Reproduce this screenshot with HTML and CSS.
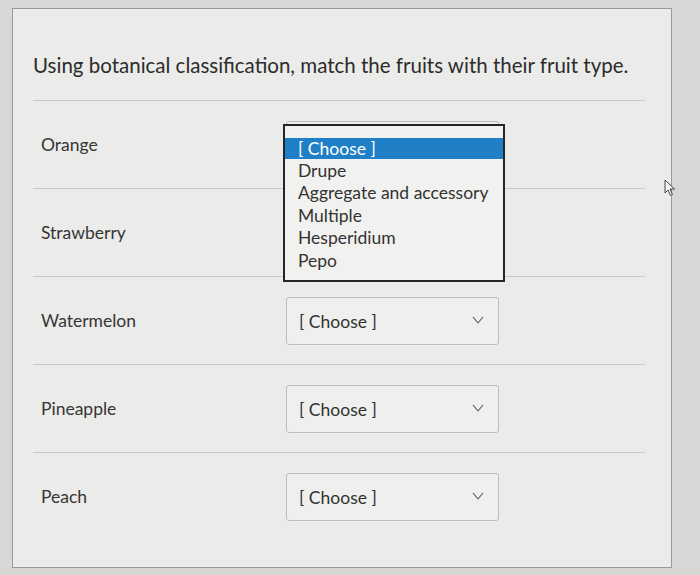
FILE: index.html
```html
<!DOCTYPE html>
<html>
<head>
<meta charset="utf-8">
<link rel="stylesheet" href="styles.css">
</head>
<body>
<div class="card">
  <div class="title">Using botanical classification, match the fruits with their fruit type.</div>
  <div class="rows">
    <div class="row">
      <div class="label">Orange</div>
      <div class="select-wrap">
        <div class="select"></div>
        <div class="listbox">
          <div class="opt selected">[ Choose ]</div>
          <div class="opt">Drupe</div>
          <div class="opt">Aggregate and accessory</div>
          <div class="opt">Multiple</div>
          <div class="opt">Hesperidium</div>
          <div class="opt">Pepo</div>
        </div>
      </div>
    </div>
    <div class="row">
      <div class="label">Strawberry</div>
      <div class="select-wrap">
        <div class="select"></div>
      </div>
    </div>
    <div class="row">
      <div class="label">Watermelon</div>
      <div class="select-wrap">
        <div class="select"><span>[ Choose ]</span><svg class="chev" viewBox="0 0 12 8"><path d="M1 1 L6 7 L11 1" fill="none" stroke="#555" stroke-width="1.1"/></svg></div>
      </div>
    </div>
    <div class="row">
      <div class="label">Pineapple</div>
      <div class="select-wrap">
        <div class="select"><span>[ Choose ]</span><svg class="chev" viewBox="0 0 12 8"><path d="M1 1 L6 7 L11 1" fill="none" stroke="#555" stroke-width="1.1"/></svg></div>
      </div>
    </div>
    <div class="row">
      <div class="label">Peach</div>
      <div class="select-wrap">
        <div class="select"><span>[ Choose ]</span><svg class="chev" viewBox="0 0 12 8"><path d="M1 1 L6 7 L11 1" fill="none" stroke="#555" stroke-width="1.1"/></svg></div>
      </div>
    </div>
  </div>
</div>
<svg class="cursor" viewBox="0 0 12 18"><path d="M1 1 L1 14 L4 11 L6.5 16.5 L8.5 15.5 L6 10 L10.5 10 Z" fill="#f4f4f4" stroke="#444" stroke-width="1"/></svg>
</body>
</html>
```
FILE: styles.css
```css
html, body {
  margin: 0;
  padding: 0;
}
body {
  width: 700px;
  height: 575px;
  background: #d7d7d5;
  font-family: Lato, "Open Sans", sans-serif;
  color: #333;
  position: relative;
  overflow: hidden;
}
.card {
  margin: 8px 0 0 12px;
  width: 660px;
  height: 560px;
  box-sizing: border-box;
  border: 1px solid #9a9a9a;
  background: #ebebe9;
  padding: 0 26px 0 20px;
}
.title {
  font-size: 20.5px;
  line-height: 26px;
  padding: 43px 0 0 0;
  height: 48px;
  color: #2c2c2c;
}
.rows {
  display: flex;
  flex-direction: column;
}
.row {
  border-top: 1px solid #c9c9c7;
  height: 87px;
  display: flex;
  align-items: center;
  padding-left: 8px;
}
.label {
  width: 245px;
  font-size: 17.5px;
  color: #353535;
}
.select-wrap {
  position: relative;
}
.select {
  width: 213px;
  height: 48px;
  box-sizing: border-box;
  border: 1px solid #bdbdbb;
  border-radius: 3px;
  background: #efefed;
  display: flex;
  align-items: center;
  justify-content: space-between;
  padding: 2px 14px 0 12px;
  font-size: 17.5px;
  color: #333;
}
.chev {
  width: 12px;
  height: 8px;
  margin-top: -4px;
}
.listbox {
  position: absolute;
  top: 3px;
  left: -3px;
  width: 222px;
  height: 158px;
  box-sizing: border-box;
  border: 2px solid #262626;
  background: #f1f1ef;
  padding-top: 12px;
  z-index: 2;
}
.opt {
  font-size: 17.5px;
  line-height: 22.5px;
  padding-left: 13px;
  color: #333;
  white-space: nowrap;
}
.opt.selected {
  background: #1f7fc7;
  color: #fff;
  line-height: 21px;
  margin-bottom: 1px;
}
.cursor {
  position: absolute;
  left: 664px;
  top: 179px;
  width: 12px;
  height: 18px;
}
```
